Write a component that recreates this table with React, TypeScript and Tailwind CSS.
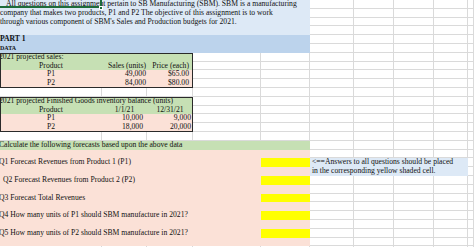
import React from "react";

const G = "border-r border-b border-[#dadada]";
const BLUE = "bg-[#dde9f6]";
const BLUE2 = "bg-[#bcd3ec]";
const GREEN = "bg-[#c6e0b4]";
const PINK = "bg-[#fbe1d7]";

const Row = ({ children }: { children: React.ReactNode }) => (
  <div className="flex h-[8.8px] shrink-0">{children}</div>
);

const W = (cls: string) => <div className={`${cls} h-full shrink-0 ${G}`} />;

// white cells from F onward
const TailF = () => (
  <>
    {W("w-[44px]")}
    {W("w-[40px]")}
    {W("w-[40px]")}
    {W("w-[34px]")}
    <div className={`flex-1 h-full ${G}`} />
  </>
);
// white cells from D onward
const TailD = () => (
  <>
    {W("w-[68px]")}
    {W("w-[49px]")}
    <TailF />
  </>
);

const T = "whitespace-nowrap leading-[8.8px] text-[7.65px] text-[#111111]";

export default function App() {
  return (
    <div
      className="w-[474px] h-[247px] overflow-hidden bg-white flex flex-col"
      style={{ fontFamily: '"Liberation Serif", "Times New Roman", serif' }}
    >
      {/* Row 1 */}
      <Row>
        <div className={`w-[310px] h-full shrink-0 ${BLUE} relative`}>
          <div className={`${T} pl-[6px]`}>
            All questions on this assignment pertain to SB Manufacturing (SBM). SBM is a manufacturing
          </div>
          <div className="absolute left-0 top-[-2px] w-[102px] h-[10px] border-r-2 border-b-2 border-[#1d6b3a]" />
          <div className="absolute left-[99px] top-[6px] w-[4px] h-[4px] bg-[#1d6b3a] border border-white" />
        </div>
        <TailF />
      </Row>
      <Row>
        <div className={`w-[310px] h-full shrink-0 ${BLUE}`}>
          <div className={T}>
            company that makes two products, P1 and P2 The objective of this assignment is to work
          </div>
        </div>
        <TailF />
      </Row>
      <Row>
        <div className={`w-[310px] h-full shrink-0 ${BLUE}`}>
          <div className={T}>through various component of SBM's Sales and Production budgets for 2021.</div>
        </div>
        <TailF />
      </Row>
      <Row>
        <div className={`w-[310px] h-full shrink-0 ${BLUE}`} />
        <TailF />
      </Row>
      <Row>
        <div className={`w-[310px] h-full shrink-0 ${BLUE2}`}>
          <div className={`${T} font-bold`}>PART 1</div>
        </div>
        <TailF />
      </Row>
      <Row>
        <div className={`w-[310px] h-full shrink-0 ${BLUE2}`}>
          <div className="whitespace-nowrap leading-[8.8px] text-[6px] font-bold text-[#111111]">DATA</div>
        </div>
        <TailF />
      </Row>

      {/* Box 1: rows 7-10 */}
      <div className="flex shrink-0">
        <div className="w-[193px] shrink-0 flex flex-col outline outline-1 -outline-offset-1 outline-[#2a2a2a]">
          <Row>
            <div className={`w-[193px] h-full ${GREEN}`}>
              <div className={`${T} -ml-[1px]`}>2021 projected sales:</div>
            </div>
          </Row>
          <Row>
            <div className={`w-[102px] h-full ${GREEN} ${T} text-center`}>Product</div>
            <div className={`w-[45px] h-full ${GREEN} ${T} text-right pr-[1px]`}>Sales (units)</div>
            <div className={`w-[46px] h-full ${GREEN} ${T} text-right pr-[4px]`}>Price (each)</div>
          </Row>
          <Row>
            <div className={`w-[102px] h-full ${PINK} ${T} text-center`}>P1</div>
            <div className={`w-[45px] h-full ${PINK} ${T} text-right pr-[1px]`}>49,000</div>
            <div className={`w-[46px] h-full ${PINK} ${T} text-right pr-[4px]`}>$65.00</div>
          </Row>
          <Row>
            <div className={`w-[102px] h-full ${PINK} ${T} text-center`}>P2</div>
            <div className={`w-[45px] h-full ${PINK} ${T} text-right pr-[1px]`}>84,000</div>
            <div className={`w-[46px] h-full ${PINK} ${T} text-right pr-[4px]`}>$80.00</div>
          </Row>
        </div>
        <div className="flex-1 flex flex-col">
          <Row><TailD /></Row>
          <Row><TailD /></Row>
          <Row><TailD /></Row>
          <Row><TailD /></Row>
        </div>
      </div>

      {/* Row 11 */}
      <Row>
        {W("w-[102px]")}
        {W("w-[45px]")}
        {W("w-[46px]")}
        <TailD />
      </Row>

      {/* Box 2: rows 12-15 */}
      <div className="flex shrink-0">
        <div className="w-[193px] shrink-0 flex flex-col outline outline-1 -outline-offset-1 outline-[#2a2a2a]">
          <Row>
            <div className={`w-[193px] h-full ${GREEN}`}>
              <div className={`${T} -ml-[1px]`}>2021 projected Finished Goods inventory balance (units)</div>
            </div>
          </Row>
          <Row>
            <div className={`w-[102px] h-full ${GREEN} ${T} text-center`}>Product</div>
            <div className={`w-[45px] h-full ${GREEN} ${T} text-center`}>1/1/21</div>
            <div className={`w-[46px] h-full ${GREEN} ${T} text-center`}>12/31/21</div>
          </Row>
          <Row>
            <div className={`w-[102px] h-full ${PINK} ${T} text-center`}>P1</div>
            <div className={`w-[45px] h-full ${PINK} ${T} text-right pr-[4px]`}>10,000</div>
            <div className={`w-[46px] h-full ${PINK} ${T} text-right pr-[2px]`}>9,000</div>
          </Row>
          <Row>
            <div className={`w-[102px] h-full ${PINK} ${T} text-center`}>P2</div>
            <div className={`w-[45px] h-full ${PINK} ${T} text-right pr-[4px]`}>18,000</div>
            <div className={`w-[46px] h-full ${PINK} ${T} text-right pr-[2px]`}>20,000</div>
          </Row>
        </div>
        <div className="flex-1 flex flex-col">
          <Row><TailD /></Row>
          <Row><TailD /></Row>
          <Row><TailD /></Row>
          <Row><TailD /></Row>
        </div>
      </div>

      {/* Row 16 */}
      <Row>
        {W("w-[102px]")}
        {W("w-[45px]")}
        {W("w-[46px]")}
        <TailD />
      </Row>

      {/* Row 17 */}
      <Row>
        <div className={`w-[310px] h-full shrink-0 ${GREEN}`}>
          <div className={`${T} -ml-[1px]`}>Calculate the following forecasts based upon the above data</div>
        </div>
        <TailF />
      </Row>
      {/* Row 18 */}
      <Row>
        <div className={`w-[310px] h-full shrink-0 ${PINK}`} />
        <TailF />
      </Row>

      {/* Rows 19-20 with answer note */}
      <div className="flex shrink-0">
        <div className="w-[310px] shrink-0 flex flex-col">
          <Row>
            <div className={`w-[261px] h-full ${PINK}`}>
              <div className={`${T} -ml-[1px]`}>Q1 Forecast Revenues from Product 1 (P1)</div>
            </div>
            <div className="w-[49px] h-full bg-[#ffff00]" />
          </Row>
          <Row>
            <div className={`w-[310px] h-full ${PINK}`} />
          </Row>
        </div>
        <div className="w-[158px] shrink-0 h-[17.6px] bg-[#dde9f6] pl-[2px]">
          <div className={T}>&lt;==Answers to all questions should be placed</div>
          <div className={T}>in the corresponding yellow shaded cell.</div>
        </div>
        <div className="flex-1 flex flex-col">
          <Row><div className={`flex-1 h-full ${G}`} /></Row>
          <Row><div className={`flex-1 h-full ${G}`} /></Row>
        </div>
      </div>

      {[
        { q: "Q2 Forecast Revenues from Product 2 (P2)", cls: "pl-[3px]" },
        { q: "Q3 Forecast Total Revenues", cls: "-ml-[1px]" },
        { q: "Q4 How many units of P1 should SBM manufacture in 2021?", cls: "-ml-[1px]" },
        { q: "Q5 How many units of P2 should SBM manufacture in 2021?", cls: "-ml-[1px]" },
      ].map((r) => (
        <React.Fragment key={r.q}>
          <Row>
            <div className={`w-[261px] h-full shrink-0 ${PINK}`}>
              <div className={`${T} ${r.cls}`}>{r.q}</div>
            </div>
            <div className="w-[49px] h-full shrink-0 bg-[#ffff00]" />
            <TailF />
          </Row>
          <Row>
            <div className={`w-[310px] h-full shrink-0 ${PINK}`} />
            <TailF />
          </Row>
        </React.Fragment>
      ))}

      <Row>
        {W("w-[102px]")}
        {W("w-[45px]")}
        {W("w-[46px]")}
        <TailD />
      </Row>
    </div>
  );
}
